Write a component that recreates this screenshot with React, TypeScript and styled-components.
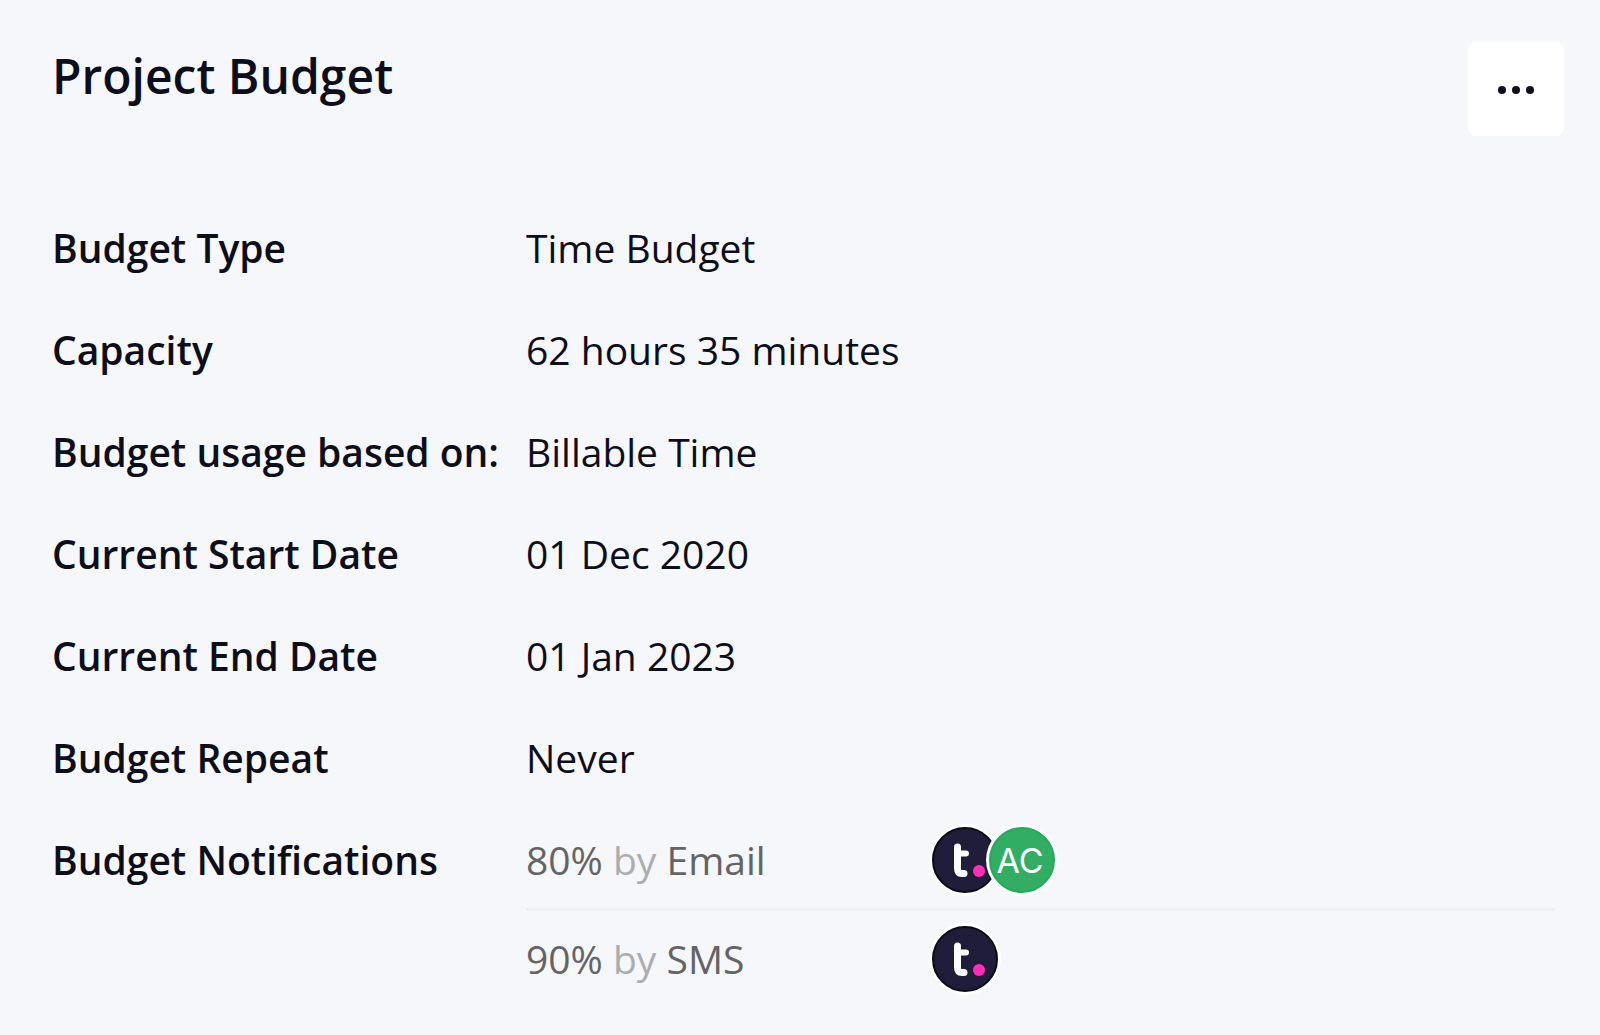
import React from "react";
import styled, { createGlobalStyle } from "styled-components";

const GlobalStyle = createGlobalStyle`
  *, *::before, *::after {
    box-sizing: border-box;
  }

  body {
    margin: 0;
    background: #f5f7fb;
    color: #0d0e1a;
    font-family: "Open Sans", "Noto Sans", sans-serif;
  }
`;

const Panel = styled.main`
  padding: 42px 36px 42px 52px;
`;

const Header = styled.header`
  display: flex;
  align-items: flex-start;
  justify-content: space-between;
  margin-bottom: 79px;
`;

const Title = styled.h1`
  margin: 0;
  font-size: 48px;
  line-height: 68px;
  font-weight: 600;
`;

const MenuButton = styled.button`
  display: flex;
  align-items: center;
  justify-content: center;
  width: 96px;
  height: 94px;
  padding: 2px 0 0;
  border: 0;
  border-radius: 8px;
  background: #ffffff;
  color: #0d0e1a;
  cursor: pointer;
`;

const Details = styled.dl`
  display: flex;
  flex-direction: column;
  gap: 36px;
  margin: 0;
  font-size: 39px;
  line-height: 66px;
`;

const Row = styled.div`
  display: grid;
  grid-template-columns: 474px 1fr;
`;

const Label = styled.dt`
  font-weight: 600;
  white-space: nowrap;
`;

const Value = styled.dd`
  margin: 0;
  font-weight: 400;
`;

const Notifications = styled.ul`
  margin: 0 9px 0 0;
  padding: 0;
  list-style: none;
`;

const Notification = styled.li`
  display: grid;
  grid-template-columns: 406px 1fr;
  color: #646464;

  & + & {
    margin-top: 15px;
    padding-top: 15px;
    border-top: 3px solid #ebeff3;
  }
`;

const Muted = styled.span`
  color: #adadad;
`;

const Avatars = styled.div`
  display: flex;
`;

const Avatar = styled.span<{ $color: string; $edge: string }>`
  display: flex;
  align-items: center;
  justify-content: center;
  width: 66px;
  height: 66px;
  border: 2px solid ${(p) => p.$edge};
  border-radius: 50%;
  background: ${(p) => p.$color};
  box-shadow: 0 0 0 3px #ffffff;
  color: #ffffff;
  font-family: "Inter", "Liberation Sans", sans-serif;
  font-size: 34px;
  line-height: 62px;

  & + & {
    margin-left: -9px;
    padding: 2px 4px 0 0;
  }
`;

function DotsIcon() {
  return (
    <svg width="36" height="8" viewBox="0 0 36 8" fill="currentColor" aria-hidden="true">
      <circle cx="4" cy="4" r="4" />
      <circle cx="18" cy="4" r="4" />
      <circle cx="32" cy="4" r="4" />
    </svg>
  );
}

function BrandAvatar() {
  return (
    <Avatar $color="#1f1d3a" $edge="#0b0a1c">
      <svg width="62" height="62" viewBox="2 2 62 62" fill="none" role="img" aria-label="Brand">
        <path
          d="M25.5 20V41Q25.5 46.500 30 46.500H32"
          stroke="#ffffff"
          strokeWidth="7"
          strokeLinecap="round"
        />
        <path d="M26 26.500H34" stroke="#ffffff" strokeWidth="6" strokeLinecap="round" />
        <circle cx="47" cy="44" r="6" fill="#ff2eb4" />
      </svg>
    </Avatar>
  );
}

const details = [
  ["Budget Type", "Time Budget"],
  ["Capacity", "62 hours 35 minutes"],
  ["Budget usage based on:", "Billable Time"],
  ["Current Start Date", "01 Dec 2020"],
  ["Current End Date", "01 Jan 2023"],
  ["Budget Repeat", "Never"],
];

const notifications = [
  { level: "80%", channel: "Email", initials: "AC" },
  { level: "90%", channel: "SMS", initials: "" },
];

export default function App() {
  return (
    <>
      <GlobalStyle />
      <Panel>
        <Header>
          <Title>Project Budget</Title>
          <MenuButton type="button" aria-label="More options">
            <DotsIcon />
          </MenuButton>
        </Header>
        <Details>
          {details.map(([label, value]) => (
            <Row key={label}>
              <Label>{label}</Label>
              <Value>{value}</Value>
            </Row>
          ))}
          <Row>
            <Label>Budget Notifications</Label>
            <Value>
              <Notifications>
                {notifications.map(({ level, channel, initials }) => (
                  <Notification key={channel}>
                    <span>
                      {level} <Muted>by</Muted> {channel}
                    </span>
                    <Avatars>
                      <BrandAvatar />
                      {initials && (
                        <Avatar $color="#31ae63" $edge="#22ab5a">
                          {initials}
                        </Avatar>
                      )}
                    </Avatars>
                  </Notification>
                ))}
              </Notifications>
            </Value>
          </Row>
        </Details>
      </Panel>
    </>
  );
}
